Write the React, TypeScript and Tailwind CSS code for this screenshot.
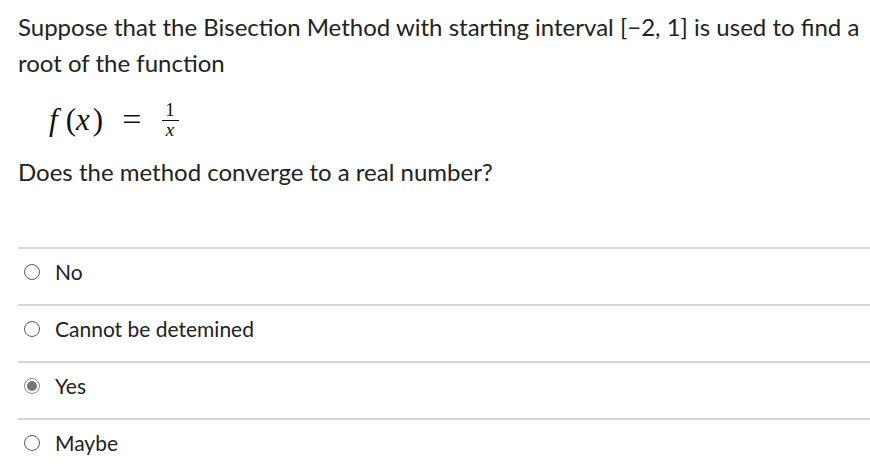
import React from "react";

const options = [
    { label: "No", checked: false },
    { label: "Cannot be detemined", checked: false },
    { label: "Yes", checked: true },
    { label: "Maybe", checked: false },
];

function Radio({ checked }: { checked: boolean }) {
    if (checked) {
        return (
            <span className="flex h-[16px] w-[16px] shrink-0 items-center justify-center rounded-full border-[1.5px] border-[#8a8a8a] bg-white">
                <span className="h-[10px] w-[10px] rounded-full bg-[#777]" />
            </span>
        );
    }
    return <span className="h-[16px] w-[16px] shrink-0 rounded-full border border-[#5a5a5a] bg-white" />;
}

export default function App() {
    return (
        <div className="h-[472px] w-[870px] overflow-hidden bg-white pl-[18px] pt-[9px] font-['Lato','Liberation_Sans',sans-serif] text-[#222]">
            {/* Question */}
            <p className="text-[24px] leading-[36px]">
                Suppose that the Bisection Method with starting interval [−2, 1] is used to find a root of the function
            </p>

            {/* Formula */}
            <div className="mt-[18px] flex h-[40px] items-center pl-[31px] font-['Liberation_Serif','Times_New_Roman',serif] text-[31px] leading-none text-[#111]">
                <span className="italic">f</span>
                <span className="ml-[8px]">(</span>
                <span className="italic">x</span>
                <span className="ml-[3px]">)</span>
                <span className="ml-[20px] scale-x-110">=</span>
                <span className="ml-[21px] inline-flex flex-col items-center text-[19px]">
                    <span className="leading-[16px]">1</span>
                    <span className="my-[2px] h-px w-[17px] bg-[#111]" />
                    <span className="italic leading-[14px]">x</span>
                </span>
            </div>

            {/* Prompt */}
            <p className="mt-[15px] text-[24px] leading-[36px]">Does the method converge to a real number?</p>

            {/* Answers */}
            <div className="mt-[57px]">
                {options.map((o) => (
                    <div
                        key={o.label}
                        className="flex h-[57px] items-center gap-[15px] border-t-2 border-[#d6d6d6] pl-[6px] pb-[10px] text-[21px]"
                    >
                        <Radio checked={o.checked} />
                        <span>{o.label}</span>
                    </div>
                ))}
            </div>
        </div>
    );
}
